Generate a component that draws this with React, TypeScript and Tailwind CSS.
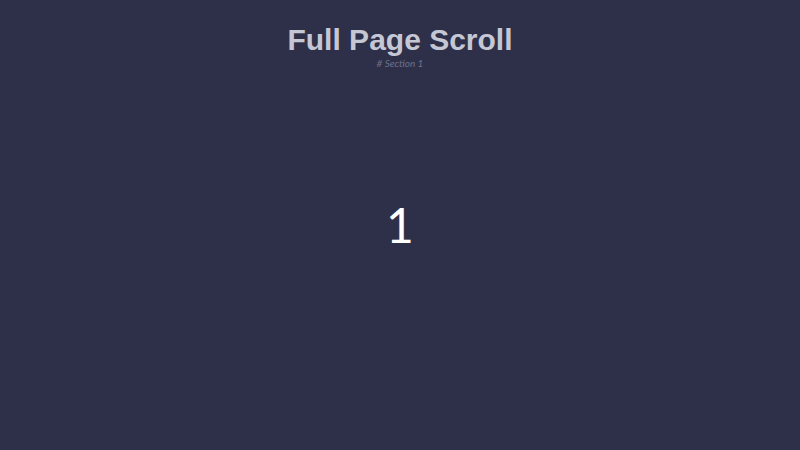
const App = () => {
  return (
    <div className="relative w-screen h-screen overflow-hidden bg-[#2e3049] font-['Lato',sans-serif]">
      <header className="absolute top-0 left-0 w-full flex flex-col items-center pt-[22px]">
        <h1 className="text-[30px] leading-[36px] font-bold text-[#c5c7d5] font-['Liberation_Sans',Arial,sans-serif]">
          Full Page Scroll
        </h1>
        <p className="text-[10px] leading-[10px] italic text-[#6e7189]">
          # Section 1
        </p>
      </header>
      <section className="w-full h-full flex justify-center items-center">
        <span className="text-[48px] leading-none text-white">1</span>
      </section>
    </div>
  );
};

export default App;
